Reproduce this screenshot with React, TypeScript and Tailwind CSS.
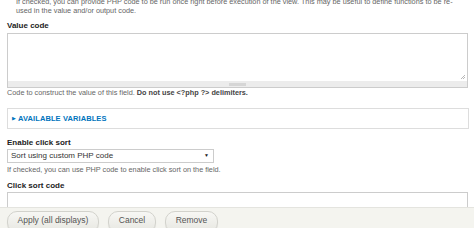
import React from 'react';

const font = { fontFamily: '"Liberation Sans", Arial, sans-serif' };

const Label = ({ children }: { children: React.ReactNode }) => (
  <div className="text-[8px] font-bold leading-[10px] text-[#222]">{children}</div>
);

const Help = ({ children }: { children: React.ReactNode }) => (
  <div className="text-[7.3px] leading-[9px] text-[#666]">{children}</div>
);

const PillButton = ({ label, width }: { label: string; width: string }) => (
  <button
    className={`h-[22px] ${width} shrink-0 rounded-[10px] border border-[#d2d2cc] bg-gradient-to-b from-[#f7f7f4] to-[#e7e7e1] pb-[3px] text-[8.5px] text-[#555] shadow-[0_1px_1px_rgba(0,0,0,0.08)]`}
  >
    {label}
  </button>
);

export default function App() {
  return (
    <div className="relative w-[474px] h-[228px] overflow-hidden bg-white" style={font}>
      <div className="pl-[7px] pr-[6px]">
        {/* description of the preceding checkbox, scrolled partly off the top */}
        <div className="mt-[-2px] pl-[9px] pr-[10px] text-[7.3px] leading-[8.5px] text-[#666]">
          If checked, you can provide PHP code to be run once right before execution of the view. This may be useful to define functions to be re-used in the value and/or output code.
        </div>

        <div className="mt-[6px]">
          <Label>Value code</Label>
        </div>
        <div className="mt-[2px] w-[461px] border border-[#ccc]">
          <div className="relative h-[47px] bg-white">
            <svg className="absolute right-[1px] bottom-[1px]" width="6" height="6" viewBox="0 0 6 6">
              <path d="M5 1L1 5M5 3L3 5" stroke="#999" strokeWidth="0.7" />
            </svg>
          </div>
          <div className="flex h-[6px] items-center bg-[#ececec]">
            <div className="ml-[221px] h-[3px] w-[17px] bg-[#d6d6d6]" />
          </div>
        </div>
        <div className="mt-0">
          <Help>
            Code to construct the value of this field. <span className="font-bold text-[#444]">Do not use &lt;?php ?&gt; delimiters.</span>
          </Help>
        </div>

        <div className="mt-[11px] flex h-[21px] w-[462px] items-center border border-[#ddd] pl-[4px]">
          <span className="mr-[2px] text-[5px] text-[#0074bd]">&#9654;</span>
          <span className="text-[7.5px] font-bold tracking-[0.1px] text-[#0074bd]">AVAILABLE VARIABLES</span>
        </div>

        <div className="mt-[9px]">
          <Label>Enable click sort</Label>
        </div>
        <div className="mt-[1px] flex h-[14px] w-[207px] items-center justify-between border border-[#ccc] pl-[3px] pr-[4px]">
          <span className="text-[8px] text-[#333]">Sort using custom PHP code</span>
          <span className="text-[5px] text-[#222]">&#9660;</span>
        </div>
        <div className="mt-[2px]">
          <Help>If checked, you can use PHP code to enable click sort on the field.</Help>
        </div>

        <div className="mt-[7px]">
          <Label>Click sort code</Label>
        </div>
        <div className="mt-[1px] h-[40px] w-[461px] border border-[#ccc]" />
      </div>

      {/* sticky action bar */}
      <div className="absolute inset-x-0 bottom-0 flex h-[21px] items-start gap-[9px] border-t border-[#e4e4df] bg-[#f4f4ef] pl-[7px] pt-[3px]">
        <PillButton label="Apply (all displays)" width="w-[92px]" />
        <PillButton label="Cancel" width="w-[48px]" />
        <PillButton label="Remove" width="w-[53px]" />
      </div>
    </div>
  );
}
